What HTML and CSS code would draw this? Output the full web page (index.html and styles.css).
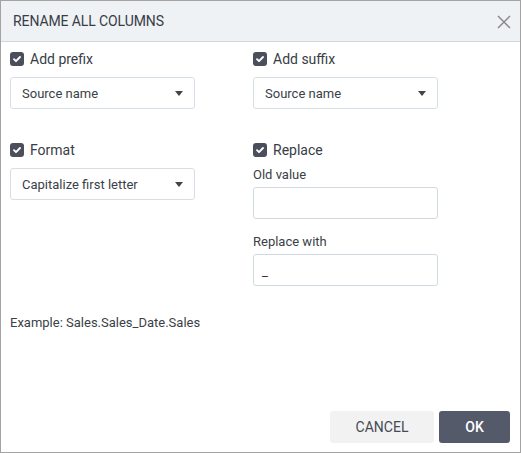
FILE: index.html
```html
<!DOCTYPE html>
<html>
<head>
<meta charset="utf-8">
<link rel="stylesheet" href="styles.css">
</head>
<body>
<div class="dialog">
  <div class="header">
    <span class="title">RENAME ALL COLUMNS</span>
    <svg class="close" width="14" height="14" viewBox="0 0 14 14"><path d="M1 1 L13 13 M13 1 L1 13" stroke="#8a8a8a" stroke-width="1.5" fill="none"/></svg>
  </div>
  <div class="body">
    <div class="grid">
      <div class="col">
        <label class="check"><span class="box"><svg width="14" height="14" viewBox="0 0 14 14"><path d="M4 7.2 L6 9.2 L10 5" stroke="#fff" stroke-width="1.9" fill="none" stroke-linecap="round" stroke-linejoin="round"/></svg></span>Add prefix</label>
        <div class="select"><span>Source name</span><span class="arrow"></span></div>
      </div>
      <div class="col">
        <label class="check"><span class="box"><svg width="14" height="14" viewBox="0 0 14 14"><path d="M4 7.2 L6 9.2 L10 5" stroke="#fff" stroke-width="1.9" fill="none" stroke-linecap="round" stroke-linejoin="round"/></svg></span>Add suffix</label>
        <div class="select"><span>Source name</span><span class="arrow"></span></div>
      </div>
      <div class="col row2">
        <label class="check"><span class="box"><svg width="14" height="14" viewBox="0 0 14 14"><path d="M4 7.2 L6 9.2 L10 5" stroke="#fff" stroke-width="1.9" fill="none" stroke-linecap="round" stroke-linejoin="round"/></svg></span>Format</label>
        <div class="select"><span>Capitalize first letter</span><span class="arrow"></span></div>
      </div>
      <div class="col row2">
        <label class="check"><span class="box"><svg width="14" height="14" viewBox="0 0 14 14"><path d="M4 7.2 L6 9.2 L10 5" stroke="#fff" stroke-width="1.9" fill="none" stroke-linecap="round" stroke-linejoin="round"/></svg></span>Replace</label>
        <div class="field-label first">Old value</div>
        <div class="input"></div>
        <div class="field-label">Replace with</div>
        <div class="input"><span>_</span></div>
      </div>
    </div>
    <div class="example">Example: Sales.Sales_Date.Sales</div>
  </div>
  <div class="footer">
    <button class="btn cancel">CANCEL</button>
    <button class="btn ok">OK</button>
  </div>
</div>
</body>
</html>
```

FILE: styles.css
```css
html, body {
  margin: 0;
  padding: 0;
  background: #fff;
}
body {
  font-family: Roboto, "Liberation Sans", sans-serif;
  color: #3a3a3a;
}
.dialog {
  width: 521px;
  height: 453px;
  box-sizing: border-box;
  border: 1px solid #a3a3a3;
  display: flex;
  flex-direction: column;
  background: #fff;
}
.header {
  height: 40px;
  background: #eff2f5;
  border-bottom: 1px solid #d2d7dc;
  display: flex;
  align-items: center;
  justify-content: space-between;
  padding: 0 9px 0 12px;
  flex-shrink: 0;
}
.title {
  font-size: 14px;
  color: #383d45;
  letter-spacing: -0.1px;
}
.close {
  display: block;
  margin-top: 1px;
}
.body {
  flex: 1;
  padding: 7px 9px 0 9px;
}
.grid {
  display: grid;
  grid-template-columns: 243px 185px;
}
.col {
  display: flex;
  flex-direction: column;
}
.row2 {
  margin-top: 31px;
}
.check {
  display: flex;
  align-items: center;
  height: 20px;
  font-size: 14px;
  color: #383d45;
}
.box {
  width: 14px;
  height: 14px;
  border-radius: 3px;
  background: #4a4f5b;
  margin-right: 6px;
  display: block;
}
.box svg {
  display: block;
}
.select {
  margin-top: 8px;
  width: 185px;
  height: 32px;
  box-sizing: border-box;
  border: 1px solid #d6dee6;
  border-radius: 3px;
  display: flex;
  align-items: center;
  justify-content: space-between;
  padding: 0 11px 0 11px;
  font-size: 13px;
  color: #3a3f48;
}
.arrow {
  width: 0;
  height: 0;
  border-left: 4px solid transparent;
  border-right: 4px solid transparent;
  border-top: 5px solid #444;
}
.field-label {
  font-size: 13px;
  line-height: 18px;
  color: #3a3f48;
  margin-top: 14px;
  margin-bottom: 3px;
}
.field-label.first {
  margin-top: 6px;
}
.input {
  width: 185px;
  height: 32px;
  box-sizing: border-box;
  border: 1px solid #d0d8e0;
  border-radius: 3px;
  display: flex;
  align-items: center;
  padding: 0 8px;
  font-size: 13px;
  color: #333;
}
.input span {
  margin-top: 3px;
}
.example {
  margin-top: 28px;
  font-size: 13px;
  line-height: 18px;
  color: #3a3f48;
}
.footer {
  display: flex;
  justify-content: flex-end;
  gap: 5px;
  padding: 0 10px 9px 0;
}
.btn {
  height: 32px;
  border: none;
  border-radius: 3px;
  font-family: Roboto, "Liberation Sans", sans-serif;
  font-size: 14px;
  padding: 0;
  cursor: pointer;
}
.cancel {
  width: 104px;
  background: #f2f2f2;
  color: #454a55;
}
.ok {
  width: 71px;
  background: #555a6b;
  color: #fff;
  font-weight: 500;
}
```
